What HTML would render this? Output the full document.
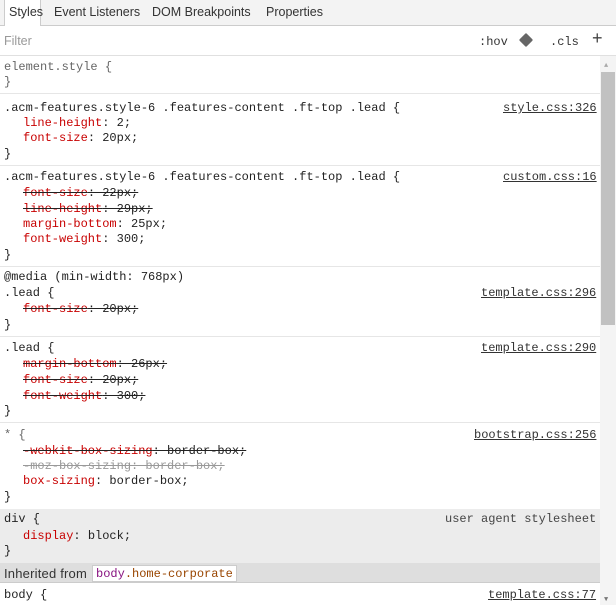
<!DOCTYPE html>
<html><head><style>
*{margin:0;padding:0;box-sizing:border-box}
body{width:616px;height:605px;overflow:hidden;background:#fff;position:relative;font-family:"Liberation Mono",monospace;font-size:12px;color:#222}
.a{position:absolute;white-space:pre;line-height:15px;margin-top:1px}
.tabs{position:absolute;left:0;top:0;width:616px;height:26px;background:#f3f3f3;border-bottom:1px solid #ccc;font-family:"Liberation Sans",sans-serif;font-size:12.5px;color:#333}
.tab{position:absolute;top:5px}
.sel{position:absolute;left:4px;top:0;width:37px;height:26px;background:#fff;border-left:1px solid #ccc;border-right:1px solid #ccc}
.hr{position:absolute;left:0;width:600px;height:1px;background:#e6e6e6}
.p{color:#c80000}
.st{text-decoration:line-through}
.lk{text-decoration:underline;color:#333}
</style></head><body>
<div class="tabs">
<div class="sel"></div>
<span class="tab" style="left:9px">Styles</span>
<span class="tab" style="left:54px">Event Listeners</span>
<span class="tab" style="left:152px">DOM Breakpoints</span>
<span class="tab" style="left:266px">Properties</span>
</div>
<div class="a" style="left:4px;top:33px;font-family:'Liberation Sans',sans-serif;font-size:12.5px;color:#999">Filter</div>
<div class="a" style="left:479px;top:34px;font-size:12px;color:#333">:hov</div>
<div style="position:absolute;left:521px;top:35px;width:10px;height:10px;background:#666;transform:rotate(45deg);border-radius:1px"></div>
<div class="a" style="left:550px;top:34px;color:#333">.cls</div>
<div class="a" style="left:592px;top:30px;font-family:'Liberation Sans',sans-serif;font-size:18px;color:#444">+</div>
<div style="position:absolute;left:0;top:55px;width:616px;height:1px;background:#e0e0e0"></div>
<div style="position:absolute;left:600px;top:56px;width:16px;height:549px;background:#f4f4f4"></div>
<div style="position:absolute;left:601px;top:72px;width:14px;height:253px;background:#c1c1c1"></div>
<div class="a" style="left:604px;top:58px;font-size:7px;color:#aaa">▲</div>
<div class="a" style="left:604px;top:592px;font-size:7px;color:#777">▼</div>

<div class="a" style="left:4px;top:59px;color:#666">element.style {</div>
<div class="a" style="left:4px;top:74px;color:#666">}</div>
<div class="hr" style="top:93px"></div>

<div class="a" style="left:4px;top:100px">.acm-features.style-6 .features-content .ft-top .lead {</div>
<div class="a lk" style="left:503px;top:100px">style.css:326</div>
<div class="a" style="left:23px;top:115px"><span class="p">line-height</span>: 2;</div>
<div class="a" style="left:23px;top:130px"><span class="p">font-size</span>: 20px;</div>
<div class="a" style="left:4px;top:146px">}</div>
<div class="hr" style="top:165px"></div>

<div class="a" style="left:4px;top:169px">.acm-features.style-6 .features-content .ft-top .lead {</div>
<div class="a lk" style="left:503px;top:169px">custom.css:16</div>
<div class="a st" style="left:23px;top:185px"><span class="p">font-size</span>: 22px;</div>
<div class="a st" style="left:23px;top:201px"><span class="p">line-height</span>: 29px;</div>
<div class="a" style="left:23px;top:216px"><span class="p">margin-bottom</span>: 25px;</div>
<div class="a" style="left:23px;top:231px"><span class="p">font-weight</span>: 300;</div>
<div class="a" style="left:4px;top:247px">}</div>
<div class="hr" style="top:266px"></div>

<div class="a" style="left:4px;top:269px">@media (min-width: 768px)</div>
<div class="a" style="left:4px;top:285px">.lead {</div>
<div class="a lk" style="left:481px;top:285px">template.css:296</div>
<div class="a st" style="left:23px;top:301px"><span class="p">font-size</span>: 20px;</div>
<div class="a" style="left:4px;top:317px">}</div>
<div class="hr" style="top:336px"></div>

<div class="a" style="left:4px;top:340px">.lead {</div>
<div class="a lk" style="left:481px;top:340px">template.css:290</div>
<div class="a st" style="left:23px;top:356px"><span class="p">margin-bottom</span>: 26px;</div>
<div class="a st" style="left:23px;top:372px"><span class="p">font-size</span>: 20px;</div>
<div class="a st" style="left:23px;top:388px"><span class="p">font-weight</span>: 300;</div>
<div class="a" style="left:4px;top:403px">}</div>
<div class="hr" style="top:422px"></div>

<div class="a" style="left:4px;top:427px;color:#666">* {</div>
<div class="a lk" style="left:474px;top:427px">bootstrap.css:256</div>
<div class="a st" style="left:23px;top:443px"><span class="p">-webkit-box-sizing</span>: border-box;</div>
<div class="a st" style="left:23px;top:458px;color:#999">-moz-box-sizing: border-box;</div>
<div class="a" style="left:23px;top:473px"><span class="p">box-sizing</span>: border-box;</div>
<div class="a" style="left:4px;top:489px">}</div>

<div style="position:absolute;left:0;top:509px;width:600px;height:54px;background:#ececec"></div>
<div class="a" style="left:4px;top:511px">div {</div>
<div class="a" style="left:445px;top:511px;color:#444">user agent stylesheet</div>
<div class="a" style="left:23px;top:528px"><span class="p">display</span>: block;</div>
<div class="a" style="left:4px;top:543px">}</div>

<div style="position:absolute;left:0;top:563px;width:600px;height:20px;background:#dedede;border-bottom:1px solid #ccc"></div>
<div class="a" style="left:4px;top:565px;font-family:'Liberation Sans',sans-serif;font-size:13px;color:#333;letter-spacing:0.2px">Inherited from</div>
<div style="position:absolute;left:92px;top:565px;width:145px;height:17px;background:#fff;border:1px solid #ccc"></div>
<div class="a" style="left:96px;top:566px"><span style="color:#881280">body</span><span style="color:#994500">.home-corporate</span></div>

<div class="a" style="left:4px;top:587px">body {</div>
<div class="a lk" style="left:488px;top:587px">template.css:77</div>
</body></html>
